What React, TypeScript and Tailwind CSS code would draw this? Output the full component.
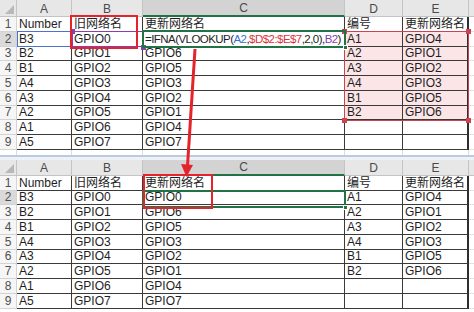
import React from "react";

const font = "font-['Liberation_Sans','Noto_Sans_CJK_SC',sans-serif]";

interface RowData {
  a: string;
  b: string;
  c: React.ReactNode;
  d: string;
  e: string;
}

const baseRows: RowData[] = [
  { a: "Number", b: "旧网络名", c: "更新网络名", d: "编号", e: "更新网络名" },
  { a: "B3", b: "GPIO0", c: "", d: "A1", e: "GPIO4" },
  { a: "B2", b: "GPIO1", c: "GPIO6", d: "A2", e: "GPIO1" },
  { a: "B1", b: "GPIO2", c: "GPIO5", d: "A3", e: "GPIO2" },
  { a: "A4", b: "GPIO3", c: "GPIO3", d: "A4", e: "GPIO3" },
  { a: "A3", b: "GPIO4", c: "GPIO2", d: "B1", e: "GPIO5" },
  { a: "A2", b: "GPIO5", c: "GPIO1", d: "B2", e: "GPIO6" },
  { a: "A1", b: "GPIO6", c: "GPIO4", d: "", e: "" },
  { a: "A5", b: "GPIO7", c: "GPIO7", d: "", e: "" },
];

const Formula = () => (
  <span className="text-[11.5px] tracking-[-0.55px]">
    =IFNA(VLOOKUP(<span className="text-[#3d6fd0]">A2</span>,
    <span className="text-[#d8343c]">$D$2:$E$7</span>,2,0),
    <span className="text-[#8a3fae]">B2</span>)
  </span>
);

const Header = ({ h }: { h: string }) => (
  <div className={`flex ${h} bg-[#e7e7e7] text-[12px] text-[#4a4a4a] leading-none`}>
    <div className="w-[17px] border-r border-b border-[#c4c4c4] relative">
      <div className="absolute right-[2px] bottom-[2px] w-0 h-0 border-l-[9px] border-l-transparent border-b-[9px] border-b-[#b8b8b8]" />
    </div>
    <div className="w-[55px] border-r border-b border-[#c4c4c4] flex items-end justify-center pb-[1px]">A</div>
    <div className="w-[71px] border-r border-b border-[#c4c4c4] flex items-end justify-center pb-[1px]">B</div>
    <div className="w-[202px] border-r border-[#c4c4c4] border-b-2 border-b-[#217346] bg-[#d3d3d3] flex items-end justify-center pb-[1px]">C</div>
    <div className="w-[58px] border-r border-b border-[#c4c4c4] flex items-end justify-center pb-[1px]">D</div>
    <div className="w-[66px] border-r border-b border-[#c4c4c4] flex items-end justify-center pb-[1px]">E</div>
    <div className="flex-1 border-b border-[#c4c4c4]" />
  </div>
);

const Grid = ({ top }: { top: boolean }) => (
  <div className="text-[12px] text-[#1e1e1e] leading-[14px]">
    {baseRows.map((r, i) => {
      const n = i + 1;
      const pink = top && n >= 2 && n <= 7;
      const cell = "border-r border-b border-[#3a3a3a] pl-[2px] whitespace-nowrap flex items-center";
      return (
        <div key={n} className="flex h-[14.75px]">
          <div
            className={`w-[17px] border-r border-b border-[#d3d3d3] flex items-center justify-center text-[#505050] ${
              n === 2 ? "bg-[#dadada]" : "bg-[#f6f6f6]"
            }`}
          >
            {n}
          </div>
          <div className={`w-[55px] ${cell}`}>{r.a}</div>
          <div className={`w-[71px] ${cell}`}>{r.b}</div>
          <div className={`w-[202px] ${cell} overflow-visible`}>
            {n === 2 ? top ? <Formula /> : "GPIO0" : r.c}
          </div>
          <div className={`w-[58px] ${cell} ${pink ? "bg-[#fbe5e7]" : ""}`}>{r.d}</div>
          <div className={`w-[66px] ${cell} border-r-2 border-r-[#2e2e2e] ${pink ? "bg-[#fbe5e7]" : ""}`}>{r.e}</div>
          <div className="flex-1 border-b border-[#e2e2e2]" />
        </div>
      );
    })}
  </div>
);

const Handle = ({ className }: { className: string }) => (
  <div className={`absolute w-[5px] h-[5px] ${className}`} />
);

export default function App() {
  return (
    <div className={`relative w-[474px] h-[312px] overflow-hidden bg-white ${font}`}>
      {/* top pane */}
      <div className="relative">
        <Header h="h-[17px]" />
        <Grid top />
        {/* A2 reference (blue) */}
        <div className="absolute left-[17px] top-[31px] w-[56px] h-[16px] border border-[#4a74c9]" />
        {/* B2 reference (purple) */}
        <div className="absolute left-[72px] top-[31px] w-[72px] h-[16px] border border-[#8a3fae]" />
        <Handle className="left-[70px] top-[29px] bg-[#8a3fae]" />
        <Handle className="left-[141px] top-[45px] bg-[#8a3fae]" />
        {/* D2:E7 reference (red) */}
        <div className="absolute left-[344px] top-[31px] w-[125px] h-[90px] border-[1.5px] border-[#c94450]" />
        <Handle className="left-[342px] top-[29px] bg-[#c94450]" />
        <Handle className="left-[466px] top-[29px] bg-[#c94450]" />
        <Handle className="left-[342px] top-[118px] bg-[#c94450]" />
        <Handle className="left-[466px] top-[118px] bg-[#c94450]" />
        {/* active cell C2 */}
        <div className="absolute left-[142px] top-[30px] w-[204px] h-[18px] border-2 border-[#217346]" />
        <Handle className="left-[343px] top-[45px] bg-[#217346] border border-white" />
        {/* annotation */}
        <div className="absolute left-[70px] top-[15px] w-[68px] h-[34px] border-[2.5px] border-[#e4232b]" />
      </div>

      {/* split bar */}
      <div className="h-[10px] flex flex-col">
        <div className="h-[5px] flex">
          <div className="w-[17px] border-r border-[#dcdcdc]" />
          <div className="w-[55px] border-r border-[#dcdcdc]" />
          <div className="w-[71px] border-r border-[#dcdcdc]" />
          <div className="w-[202px] border-r border-[#dcdcdc]" />
          <div className="w-[58px] border-r border-[#dcdcdc]" />
          <div className="w-[66px] border-r border-[#dcdcdc]" />
        </div>
        <div className="h-[2px] bg-[#b9cbe3]" />
        <div className="h-[3px] bg-[#eef1f5]" />
      </div>

      {/* bottom pane */}
      <div className="relative">
        <Header h="h-[16px]" />
        <Grid top={false} />
        <div className="absolute left-[142px] top-[30px] w-[204px] h-[18px] border-2 border-[#217346]" />
        <Handle className="left-[343px] top-[45px] bg-[#217346] border border-white" />
        <div className="absolute left-[143px] top-[14px] w-[70px] h-[35px] border-[2.5px] border-[#e4232b]" />
      </div>

      {/* arrow */}
      <svg className="absolute left-0 top-0" width="474" height="312" viewBox="0 0 474 312">
        <line x1="195" y1="49" x2="187.5" y2="166" stroke="#e4232b" strokeWidth="3" />
        <polygon points="181,164 193,165 186.5,177" fill="#e4232b" />
      </svg>
    </div>
  );
}
